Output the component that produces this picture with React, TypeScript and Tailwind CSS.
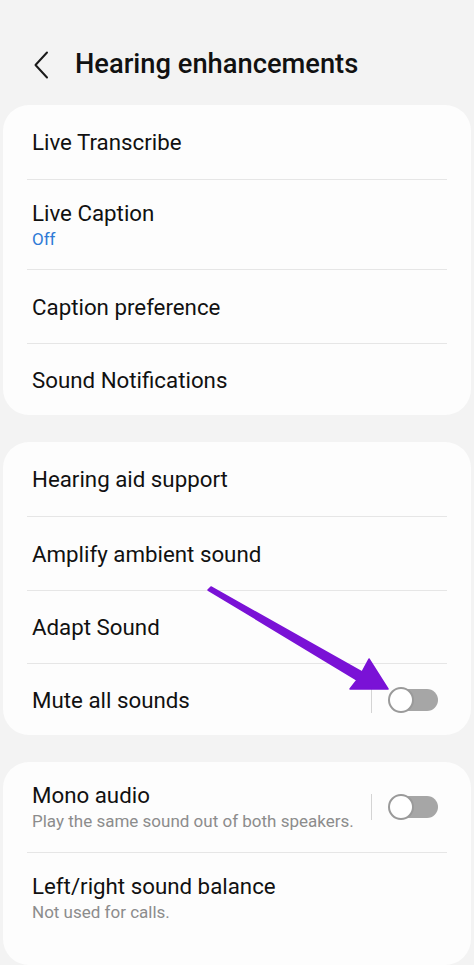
type Row = {
	title: string;
	sub?: string;
	subBlue?: boolean;
	h: string;
	toggle?: boolean;
};

const groups: Row[][] = [
	[
		{ title: "Live Transcribe", h: "h-[74px]" },
		{ title: "Live Caption", sub: "Off", subBlue: true, h: "h-[89px]" },
		{ title: "Caption preference", h: "h-[73px]" },
		{ title: "Sound Notifications", h: "h-[71px]" },
	],
	[
		{ title: "Hearing aid support", h: "h-[74px]" },
		{ title: "Amplify ambient sound", h: "h-[73px]" },
		{ title: "Adapt Sound", h: "h-[72px]" },
		{ title: "Mute all sounds", h: "h-[71px]", toggle: true },
	],
	[
		{
			title: "Mono audio",
			sub: "Play the same sound out of both speakers.",
			h: "h-[90px]",
			toggle: true,
		},
		{ title: "Left/right sound balance", sub: "Not used for calls.", h: "h-[90px]" },
	],
];

function Toggle() {
	return (
		<div className="flex items-center">
			<div className="w-px h-[26px] bg-[#d4d4d4] mr-[16px]" />
			<div className="relative w-[50px] h-[26px]">
				<div className="absolute right-0 top-[2px] w-[40px] h-[22px] rounded-full bg-[#a6a6a6]" />
				<div className="absolute left-0 top-0 w-[26px] h-[26px] rounded-full bg-white border-2 border-[#9a9a9a]" />
			</div>
		</div>
	);
}

function SettingRow({ row }: { row: Row }) {
	return (
		<div className={`${row.h} flex items-center justify-between pl-[29px] pr-[33px]`}>
			<div className="flex flex-col">
				<span className="text-[22.3px] leading-[28px] text-[#111111]">{row.title}</span>
				{row.sub && (
					<span
						className={
							row.subBlue
								? "text-[17px] leading-[24px] text-[#2f7ad6]"
								: "text-[17px] leading-[24px] text-[#8c8c8c]"
						}>
						{row.sub}
					</span>
				)}
			</div>
			{row.toggle && <Toggle />}
		</div>
	);
}

export default function App() {
	return (
		<div
			className="relative w-[474px] h-[970px] overflow-hidden bg-[#f3f3f3]"
			style={{ fontFamily: "Roboto, 'Noto Sans', sans-serif" }}>
			{/* header */}
			<div className="h-[105px] flex items-center pl-[33px] pt-[24px]">
				<svg width="16" height="28" viewBox="0 0 16 28" className="text-[#1a1a1a]">
					<path d="M14 1.5 L2.5 14 L14 26.5" fill="none" stroke="currentColor" strokeWidth="2" strokeLinecap="round" strokeLinejoin="round" />
				</svg>
				<h1 className="ml-[26px] text-[27.3px] font-medium text-[#111111]">Hearing enhancements</h1>
			</div>

			<div className="flex flex-col gap-[27px] px-[3px]">
				{groups.map((g, gi) => (
					<div key={gi} className={`bg-[#fdfdfd] rounded-[26px] flex flex-col ${gi === 2 ? "pb-[22px]" : ""}`}>
						{g.map((row, ri) => (
							<div key={row.title}>
								{ri > 0 && <div className="mx-[24px] h-px bg-[#e6e6e6]" />}
								<SettingRow row={row} />
							</div>
						))}
					</div>
				))}
			</div>

			{/* cut-off next row */}
			<div className="h-[10px] bg-white overflow-hidden pl-[32px]">
				<span className="block text-[22.3px] leading-[28px] text-[#111111]">System sound and vibration</span>
			</div>

			{/* annotation arrow */}
			<svg
				className="absolute left-0 top-0 pointer-events-none"
				width="474"
				height="970"
				viewBox="0 0 474 970">
				<polygon
					points="208,590 211,587 362,672 369,659 388,689 350,689 357,680"
					fill="#7a12d6"
					strokeLinejoin="round"
					stroke="#7a12d6"
					strokeWidth="1.5"
				/>
			</svg>
		</div>
	);
}
